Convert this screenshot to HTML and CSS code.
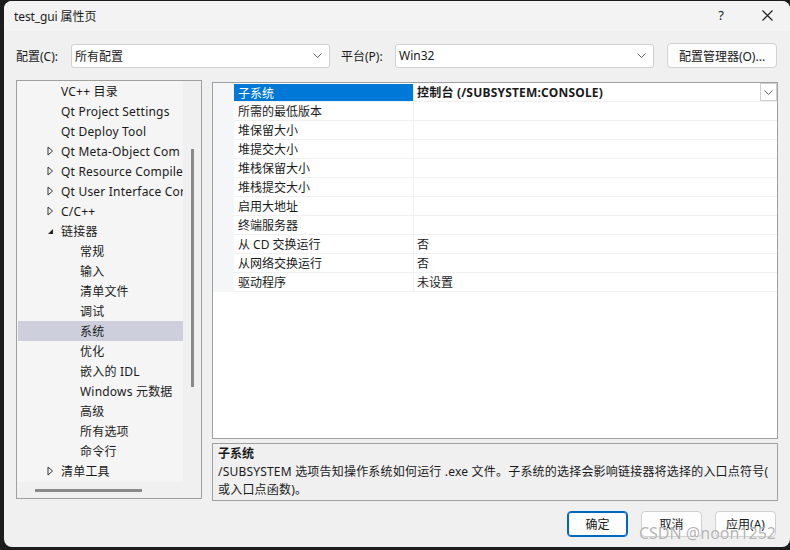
FILE: index.html
```html
<!DOCTYPE html>
<html lang="zh-CN">
<head>
<meta charset="utf-8">
<title>test_gui 属性页</title>
<link rel="stylesheet" href="styles.css">
</head>
<body>
<div class="window">
  <div class="titlebar">
    <span class="title">test_gui 属性页</span>
    <span class="tb-spacer"></span>
    <span class="tb-btn help">?</span>
    <span class="tb-btn close"><svg width="11" height="11" viewBox="0 0 11 11"><path d="M0.5 0.5 L10.5 10.5 M10.5 0.5 L0.5 10.5" stroke="#1a1a1a" stroke-width="1.1" fill="none"/></svg></span>
  </div>

  <div class="toolbar">
    <span class="lbl lbl-config">配置(C):</span>
    <div class="combo"><span class="combo-text">所有配置</span><svg class="chev" width="9" height="5" viewBox="0 0 9 5"><path d="M0.5 0.5 L4.5 4.5 L8.5 0.5" stroke="#606060" fill="none"/></svg></div>
    <span class="lbl lbl-platform">平台(P):</span>
    <div class="combo"><span class="combo-text">Win32</span><svg class="chev" width="9" height="5" viewBox="0 0 9 5"><path d="M0.5 0.5 L4.5 4.5 L8.5 0.5" stroke="#606060" fill="none"/></svg></div>
    <button class="btn btn-cfgmgr">配置管理器(O)...</button>
  </div>

  <div class="main">
    <div class="tree-panel">
      <div class="tree-body">
        <div class="tree-list">
          <div class="ti"><span class="exp"></span>VC++ 目录</div>
          <div class="ti"><span class="exp"></span>Qt Project Settings</div>
          <div class="ti"><span class="exp"></span>Qt Deploy Tool</div>
          <div class="ti"><span class="exp"><svg width="7" height="10" viewBox="0 0 7 10"><path d="M1 1 L5.5 5 L1 9 Z" stroke="#333" fill="none"/></svg></span>Qt Meta-Object Com</div>
          <div class="ti"><span class="exp"><svg width="7" height="10" viewBox="0 0 7 10"><path d="M1 1 L5.5 5 L1 9 Z" stroke="#333" fill="none"/></svg></span>Qt Resource Compile</div>
          <div class="ti"><span class="exp"><svg width="7" height="10" viewBox="0 0 7 10"><path d="M1 1 L5.5 5 L1 9 Z" stroke="#333" fill="none"/></svg></span>Qt User Interface Cor</div>
          <div class="ti"><span class="exp"><svg width="7" height="10" viewBox="0 0 7 10"><path d="M1 1 L5.5 5 L1 9 Z" stroke="#333" fill="none"/></svg></span>C/C++</div>
          <div class="ti"><span class="exp"><svg width="7" height="10" viewBox="0 0 7 10"><path d="M6 3 L6 8 L1 8 Z" fill="#222"/></svg></span>链接器</div>
          <div class="ti l2">常规</div>
          <div class="ti l2">输入</div>
          <div class="ti l2">清单文件</div>
          <div class="ti l2">调试</div>
          <div class="ti l2 sel">系统</div>
          <div class="ti l2">优化</div>
          <div class="ti l2">嵌入的 IDL</div>
          <div class="ti l2">Windows 元数据</div>
          <div class="ti l2">高级</div>
          <div class="ti l2">所有选项</div>
          <div class="ti l2">命令行</div>
          <div class="ti"><span class="exp"><svg width="7" height="10" viewBox="0 0 7 10"><path d="M1 1 L5.5 5 L1 9 Z" stroke="#333" fill="none"/></svg></span>清单工具</div>
        </div>
        <div class="vscroll"><div class="vthumb"></div></div>
      </div>
      <div class="hscroll"><div class="hthumb"></div></div>
    </div>

    <div class="right-col">
      <div class="grid-panel">
        <div class="grid">
          <div class="row"><div class="gutter"></div><div class="name selected">子系统</div><div class="value bold"><span>控制台 (/SUBSYSTEM:CONSOLE)</span><span class="dd"><svg width="9" height="5" viewBox="0 0 9 5"><path d="M0.5 0.5 L4.5 4.5 L8.5 0.5" stroke="#606060" fill="none"/></svg></span></div></div>
          <div class="row"><div class="gutter"></div><div class="name">所需的最低版本</div><div class="value"></div></div>
          <div class="row"><div class="gutter"></div><div class="name">堆保留大小</div><div class="value"></div></div>
          <div class="row"><div class="gutter"></div><div class="name">堆提交大小</div><div class="value"></div></div>
          <div class="row"><div class="gutter"></div><div class="name">堆栈保留大小</div><div class="value"></div></div>
          <div class="row"><div class="gutter"></div><div class="name">堆栈提交大小</div><div class="value"></div></div>
          <div class="row"><div class="gutter"></div><div class="name">启用大地址</div><div class="value"></div></div>
          <div class="row"><div class="gutter"></div><div class="name">终端服务器</div><div class="value"></div></div>
          <div class="row"><div class="gutter"></div><div class="name">从 CD 交换运行</div><div class="value">否</div></div>
          <div class="row"><div class="gutter"></div><div class="name">从网络交换运行</div><div class="value">否</div></div>
          <div class="row"><div class="gutter"></div><div class="name">驱动程序</div><div class="value">未设置</div></div>
        </div>
      </div>
      <div class="desc">
        <div class="desc-title">子系统</div>
        <div class="desc-text">/SUBSYSTEM 选项告知操作系统如何运行 .exe 文件。子系统的选择会影响链接器将选择的入口点符号(&#8203;或入口点函数)。</div>
      </div>
    </div>
  </div>

  <div class="footer">
    <button class="btn fbtn default">确定</button>
    <button class="btn fbtn">取消</button>
    <button class="btn fbtn">应用(A)</button>
  </div>
  <div class="watermark">CSDN @noon1252</div>
</div>
</body>
</html>
```

FILE: styles.css
```css
* { box-sizing: border-box; }
html, body { margin: 0; padding: 0; }
body {
  width: 790px;
  height: 550px;
  overflow: hidden;
  background: #1c1c1c;
  font-family: "Noto Sans", "Noto Sans CJK SC", sans-serif;
  font-size: 12px;
  color: #1a1a1a;
}
.window {
  position: relative;
  margin: 1px 0 0 4px;
  width: 786px;
  height: 546px;
  background: #f0f0f0;
  border-radius: 8px;
  overflow: hidden;
  display: flex;
  flex-direction: column;
}
.titlebar {
  height: 30px;
  background: #f3f3f3;
  display: flex;
  align-items: center;
  padding-left: 10px;
  flex: none;
}
.title { font-size: 12px; letter-spacing: -0.1px; }
.tb-spacer { flex: 1; }
.tb-btn {
  width: 46px;
  height: 30px;
  display: flex;
  align-items: center;
  justify-content: center;
}
.help { font-size: 13px; padding-bottom: 2px; }
.close svg { margin-top: -1px; }

.toolbar {
  margin-top: 12px;
  height: 25px;
  display: flex;
  align-items: center;
  padding-left: 12px;
  flex: none;
}
.lbl { display: block; }
.lbl-config { width: 55px; }
.lbl-platform { width: 54px; margin-left: 11px; }
.combo {
  width: 259px;
  height: 24px;
  background: #fff;
  border: 1px solid #d0d0d0;
  border-radius: 3px;
  display: flex;
  align-items: center;
  padding: 0 7px 0 3px;
}
.combo-text { flex: 1; }
.btn {
  font-family: inherit;
  font-size: 12px;
  color: #1a1a1a;
  background: #fdfdfd;
  border: 1px solid #d0d0d0;
  border-radius: 4px;
  padding: 0;
}
.btn-cfgmgr {
  margin-left: 13px;
  width: 110px;
  height: 25px;
}

.main {
  margin-top: 12px;
  display: flex;
  padding-left: 12px;
  height: 421px;
  flex: none;
}
.tree-panel {
  width: 186px;
  height: 419px;
  border: 1px solid #a0a0a0;
  display: flex;
  flex-direction: column;
}
.tree-body {
  display: flex;
  height: 401px;
}
.tree-list {
  width: 166px;
  background: #f5f5f5;
  overflow: hidden;
  letter-spacing: 0.2px;
}
.ti {
  height: 20px;
  display: flex;
  align-items: center;
  padding-left: 30px;
  white-space: nowrap;
  overflow: hidden;
}
.exp {
  width: 14px;
  flex: none;
  display: flex;
  align-items: center;
}
.ti.l2 { padding-left: 63px; }
.ti.sel { background: #cdd0dc; margin-left: 1px; padding-left: 62px; }
.vscroll {
  flex: 1;
  display: flex;
  justify-content: center;
}
.vthumb {
  width: 3px;
  height: 238px;
  margin-top: 68px;
  background: #8a8a8a;
}
.hscroll {
  height: 16px;
  padding-left: 18px;
}
.hthumb {
  width: 107px;
  height: 3px;
  margin-top: 7px;
  background: #8a8a8a;
}

.right-col {
  margin-left: 10px;
  width: 566px;
  display: flex;
  flex-direction: column;
}
.grid-panel {
  margin-top: 2px;
  height: 357px;
  border: 1px solid #a0a0a0;
  background: #fff;
}
.row {
  display: flex;
  height: 19px;
}
.gutter {
  width: 21px;
  background: #f5f6f8;
}
.name {
  width: 180px;
  padding-left: 4px;
  display: flex;
  align-items: center;
  border-bottom: 1px solid #f0f0f0;
  border-right: 1px solid #f0f0f0;
  white-space: nowrap;
}
.name.selected {
  background: #0078d7;
  color: #fff;
  border-top: 1px solid #fff;
}
.value {
  flex: 1;
  padding-left: 3px;
  display: flex;
  align-items: center;
  border-bottom: 1px solid #f0f0f0;
}
.value.bold span:first-child { font-weight: bold; flex: 1; letter-spacing: 0.2px; }
.dd {
  width: 17px;
  height: 18px;
  border: 1px solid #cfcfcf;
  background: #fff;
  display: flex;
  align-items: center;
  justify-content: center;
  align-self: flex-start;
}
.desc {
  margin-top: 4px;
  height: 58px;
  border: 1px solid #a0a0a0;
  background: #f0f0f0;
  padding: 1px 4px 0 5px;
  line-height: 18px;
}
.desc-title { font-weight: bold; }
.desc-text { letter-spacing: 0.2px; }

.footer {
  margin-top: 10px;
  display: flex;
  justify-content: flex-end;
  gap: 13px;
  padding-right: 14px;
}
.fbtn {
  width: 61px;
  height: 26px;
}
.fbtn.default {
  border: 1px solid #0067c0;
  box-shadow: inset 0 0 0 1px #0067c0;
}
.watermark {
  position: absolute;
  right: 14px;
  bottom: 3px;
  font-size: 16px;
  color: rgba(165, 165, 165, 0.85);
  text-shadow: 0 0 1px #fff;
  pointer-events: none;
}
```
